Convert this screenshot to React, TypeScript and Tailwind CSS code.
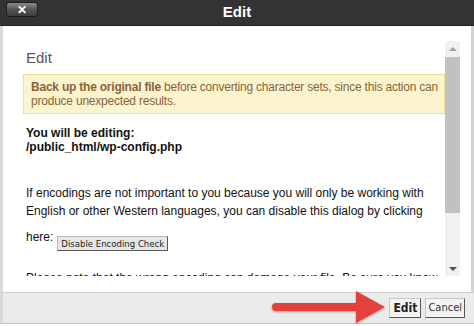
import React from 'react';

// Edit dialog (cPanel file manager style)

const body = { fontFamily: '"Liberation Sans", Arial, sans-serif' };
const ui = { fontFamily: '"DejaVu Sans Condensed", "DejaVu Sans", Tahoma, sans-serif' };

function RedArrow() {
    return (
        <svg className="absolute left-[268px] top-[288px]" width="120" height="38" viewBox="0 0 120 38">
            <defs>
                <filter id="sh" x="-10%" y="-20%" width="130%" height="150%">
                    <feDropShadow dx="0" dy="1" stdDeviation="1" floodColor="#000" floodOpacity="0.35" />
                </filter>
            </defs>
            <g filter="url(#sh)">
                <path d="M8 15 L88 15 L88 3 L117 19 L88 35 L88 23 L8 23 A4 4 0 0 1 8 15 Z" fill="#e2433b" />
            </g>
        </svg>
    );
}

function FakeScrollbar() {
    return (
        <div className="w-[15px] shrink-0 bg-[#f1f1f1] flex flex-col items-center">
            <div className="h-[15px] w-full flex items-center justify-center">
                <div className="w-0 h-0 border-l-[4px] border-r-[4px] border-b-[4px] border-l-transparent border-r-transparent border-b-[#a3a3a3]" />
            </div>
            <div className="mt-[1px] h-[156px] w-full bg-[#c1c1c1]" />
            <div className="flex-1" />
            <div className="h-[15px] w-full flex items-center justify-center">
                <div className="w-0 h-0 border-l-[4px] border-r-[4px] border-t-[4px] border-l-transparent border-r-transparent border-t-[#505050]" />
            </div>
        </div>
    );
}

export default function App() {
    return (
        <div className="relative w-[474px] h-[326px] overflow-hidden bg-white flex flex-col">
            {/* header */}
            <div className="h-[26px] shrink-0 bg-[#333333] border-b border-[#1f1f1f] flex items-center relative">
                <button
                    className="absolute left-[6px] top-[2px] w-[32px] h-[15px] rounded-[3px] border border-[#1e1e1e] bg-gradient-to-b from-[#8a8a8a] via-[#555555] to-[#3c3c3c] flex items-center justify-center text-white text-[12px] font-bold leading-none"
                    style={body}
                >
                    ✕
                </button>
                <div className="w-full text-center text-white font-bold text-[15px]" style={body}>Edit</div>
            </div>

            {/* body */}
            <div className="flex-1 flex flex-col border-l-[3px] border-l-[#d9d9d9] border-r-[3px] border-r-[#d4d4d4] bg-white">
                <div className="pt-[15px] pl-[20px] pr-[11px] flex">
                    <div className="flex-1 h-[235px] overflow-hidden text-[12px] leading-[14px] text-[#222]" style={body}>
                        <div className="pl-[3px] pt-[8px] text-[15px] leading-[18px] text-[#555]">Edit</div>
                        <div className="mt-[7px] bg-[#fcf4cf] border border-[#efdd9a] pl-[7px] pr-[1px] pt-[5px] pb-[5px] text-[#8a6436] tracking-[-0.22px]">
                            <b>Back up the original file</b> before converting character sets, since this action can produce unexpected results.
                        </div>
                        <div className="pl-[3px] mt-[12px] font-bold text-[#111]">
                            <div>You will be editing:</div>
                            <div>/public_html/wp-config.php</div>
                        </div>
                        <div className="pl-[3px] pr-[6px] mt-[30px] leading-[18px] text-[#111]">
                            If encodings are not important to you because you will only be working with English or other Western languages, you can disable this dialog by clicking
                        </div>
                        <div className="pl-[3px] mt-[10px] flex items-start text-[#111]">
                            <span>here:</span>
                            <button
                                className="ml-[4px] mt-[6px] h-[15px] px-[3px] bg-[#e6e6e6] border border-[#b5b5b5] border-r-[#555] border-b-[#555] text-[9.5px] leading-[12px] text-[#222]"
                                style={ui}
                            >
                                Disable Encoding Check
                            </button>
                        </div>
                        <div className="pl-[3px] mt-[20px] text-[#111]">
                            Please note that the wrong encoding can damage your file. Be sure you know what encoding this file uses.
                        </div>
                    </div>
                    <FakeScrollbar />
                </div>
            </div>

            {/* footer */}
            <div className="h-[32px] shrink-0 bg-[#ebebeb] border-t border-[#cfcfcf] border-b border-b-[#c4c4c4] border-l-[3px] border-l-[#d9d9d9] flex items-center justify-end gap-[4px] pr-[9px] mb-[2px]">
                <button
                    className="h-[20px] px-[3px] bg-[#f3f3f3] border border-[#c8c8c8] border-r-[#555] border-b-[#555] text-[12px] font-bold text-[#222]"
                    style={ui}
                >
                    Edit
                </button>
                <button
                    className="h-[20px] px-[2px] bg-[#f3f3f3] border border-[#c8c8c8] border-r-[#555] border-b-[#555] text-[11px] text-[#333]"
                    style={ui}
                >
                    Cancel
                </button>
            </div>

            <RedArrow />
        </div>
    );
}
